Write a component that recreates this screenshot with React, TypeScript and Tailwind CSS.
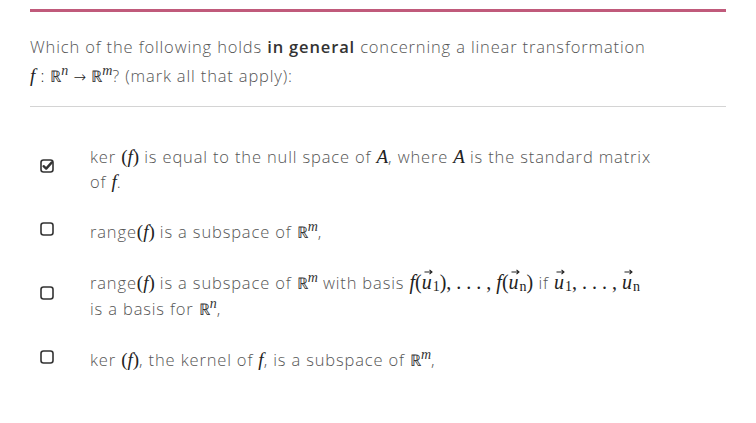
import React from "react";

const TEXT = "font-['Open_Sans',sans-serif]";

function M({ children, className = "" }: { children: React.ReactNode; className?: string }) {
  return (
    <span className={`font-['Liberation_Serif',serif] italic text-[19px] tracking-normal text-[#222] ${className}`}>
      {children}
    </span>
  );
}

function R({ sup }: { sup: string }) {
  return (
    <span className="font-['DejaVu_Sans',sans-serif] text-[16px] tracking-normal text-[#333] not-italic">
      ℝ<sup className="font-['Liberation_Serif',serif] italic text-[14px] -top-[7px]">{sup}</sup>
    </span>
  );
}

function Vec({ sub }: { sub: string }) {
  return (
    <span className="font-['Liberation_Serif',serif] tracking-normal text-[#222]">
      <span className="relative inline-block italic text-[20px]">
        u
        <svg width="9" height="6" viewBox="0 0 9 6" className="absolute left-[2px] -top-[1px]">
          <path d="M0.5 3 H8 M5.5 0.8 L8 3 L5.5 5.2" fill="none" stroke="#222" strokeWidth="1.1" />
        </svg>
      </span>
      <sub className="not-italic text-[14px] -bottom-[2px] pl-[1px]">{sub}</sub>
    </span>
  );
}

function Box({ checked }: { checked?: boolean }) {
  return (
    <svg width="14" height="14" viewBox="0 0 14 14" className="shrink-0">
      <rect x="1" y="1" width="12" height="12" rx="2.5" fill="none" stroke="#333" strokeWidth="1.6" />
      {checked && (
        <path d="M3.6 7.2 L6.2 9.6 L11.8 3.4" fill="none" stroke="#333" strokeWidth="2.4" strokeLinecap="round" strokeLinejoin="round" />
      )}
    </svg>
  );
}

function Option({ checked, children }: { checked?: boolean; children: React.ReactNode }) {
  return (
    <div className="flex items-center">
      <div className="w-[60px] pl-[10px] mb-[7px]">
        <Box checked={checked} />
      </div>
      <div className="text-[16.5px] tracking-[0.85px] leading-[25px] text-[#555] font-light">{children}</div>
    </div>
  );
}

const DOTS = "not-italic tracking-[3px] text-[20px]";

export default function App() {
  return (
    <div className={`w-[756px] h-[423px] bg-white px-[30px] pt-[9px] ${TEXT}`}>
      <div className="h-[3px] bg-[#c05a7b]" />
      <p className="mt-[20px] text-[16.5px] tracking-[0.85px] leading-[29px] text-[#555] font-light">
        Which of the following holds <b className="font-semibold text-[#333]">in general</b> concerning a linear transformation
        <br />
        <M>f</M> <span className="text-[#222]">:</span> <R sup="n" />{" "}
        <span className="font-['DejaVu_Sans',sans-serif] text-[15px] tracking-normal text-[#222]">→</span> <R sup="m" />? (mark all that apply):
      </p>
      <div className="mt-[14px] h-px bg-[#d4d4d4]" />
      <div className="flex flex-col gap-[25px] pt-[37px]">
        <Option checked>
          ker <M className="not-italic">(</M>
          <M>f</M>
          <M className="not-italic">)</M> is equal to the null space of <M>A</M>, where <M>A</M> is the standard matrix
          <br />
          of <M>f</M>.
        </Option>
        <Option>
          range<M className="not-italic">(</M>
          <M>f</M>
          <M className="not-italic">)</M> is a subspace of <R sup="m" />,
        </Option>
        <Option>
          range<M className="not-italic">(</M>
          <M>f</M>
          <M className="not-italic">)</M> is a subspace of <R sup="m" /> with basis{" "}
          <M className="text-[20px]">f</M>
          <M className="not-italic text-[20px]">(</M>
          <Vec sub="1" />
          <M className={DOTS}>), . . . , </M>
          <M className="text-[20px]">f</M>
          <M className="not-italic text-[20px]">(</M>
          <Vec sub="n" />
          <M className="not-italic text-[20px]">)</M> if <Vec sub="1" />
          <M className={DOTS}>, . . . , </M>
          <Vec sub="n" />
          <br />
          is a basis for <R sup="n" />,
        </Option>
        <Option>
          ker <M className="not-italic">(</M>
          <M>f</M>
          <M className="not-italic">)</M>, the kernel of <M>f</M>, is a subspace of <R sup="m" />,
        </Option>
      </div>
    </div>
  );
}
